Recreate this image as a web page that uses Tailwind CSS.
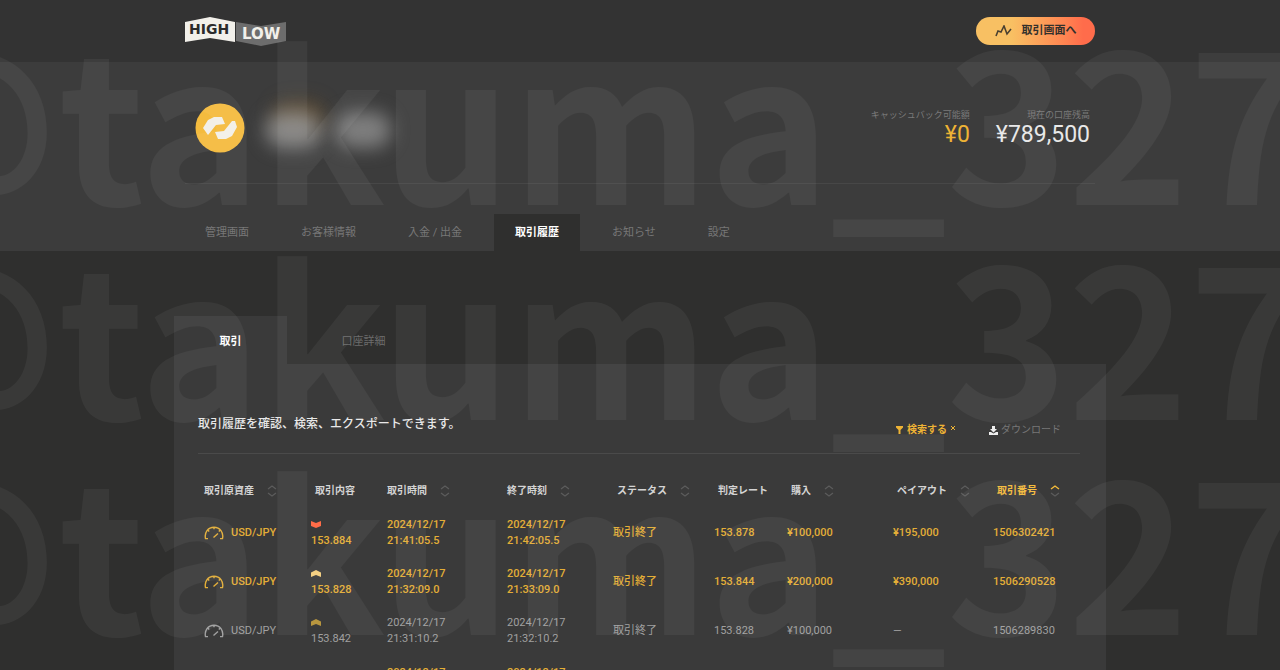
<!DOCTYPE html>
<html lang="ja">
<head>
    <meta charset="UTF-8">
    <meta name="viewport" content="width=device-width, initial-scale=1.0">
    <title>取引履歴 | HighLow</title>
    <script src="https://cdn.jsdelivr.net/npm/@tailwindcss/browser@4"></script>
</head>
<body class="bg-[#2f2f2e] font-['Roboto','Noto_Sans_CJK_JP',sans-serif] text-[11px] text-[#e8e8e8]">
<div class="relative min-h-screen overflow-hidden">

    <svg class="hidden">
        <symbol id="sort" viewBox="0 0 10 12">
            <path d="M1 4 5 1l4 3M1 8l4 3 4-3" fill="none" stroke="#5c5c5c" stroke-width="1.2"/>
        </symbol>
        <symbol id="sort-up" viewBox="0 0 10 12">
            <path d="M1 8l4 3 4-3" fill="none" stroke="#5c5c5c" stroke-width="1.2"/>
            <path d="M1 4 5 1l4 3" fill="none" stroke="#f4bb3a" stroke-width="1.4"/>
        </symbol>
        <symbol id="gauge" viewBox="0 0 20 14">
            <path d="M4 12.600H1.500C.2 6.500 4 1.200 10 1.200s9.800 5.300 8.500 11.400H16M10 1.200v2M4 4.200l1.200 1.200M16 4.200l-1.200 1.200M9.500 11.500l4.500-4" fill="none" stroke="currentColor" stroke-width="1.400"/>
        </symbol>
        <symbol id="low" viewBox="0 0 10 7">
            <path d="M0 0l5 2 5-2v5L5 7 0 5z" fill="#ff6c48"/>
        </symbol>
        <symbol id="high" viewBox="0 0 10 7">
            <path d="M0 2.500 5 0l5 2.500V7L5 5 0 7z" fill="currentColor"/>
        </symbol>
    </svg>

    <!-- header -->
    <header class="bg-[#333]">
        <div class="mx-auto flex h-[62px] max-w-[910px] items-center justify-between">
            <a href="#" aria-label="HighLow" class="pt-0.5">
                <svg class="h-[30px] w-[101px]" viewBox="0 0 101 30">
                    <path d="M0 5 25 0l25 5v20l-25-4-25 4z" fill="#f2f0ea"/>
                    <path d="M51 5l25 4 25-4v19l-25 5-25-5z" fill="#6d6d6d"/>
                    <text x="4" y="17" class="font-['DejaVu_Sans'] text-[14px] font-bold" fill="#2b2b2b">HIGH</text>
                    <text x="57" y="22" class="font-['DejaVu_Sans'] text-[15px] font-bold" fill="#f2f0ea">LOW</text>
                </svg>
            </a>
            <button class="flex h-7 w-[119px] items-center justify-center gap-2.5 rounded-full bg-linear-to-r from-[#f8c063] from-30% to-[#ff6c4b] to-90% font-bold text-[#33302c]">
                <svg class="h-3 w-[17px]" viewBox="0 0 17 12"><path d="M1 11 3 6l3 1 3-6 3 8 4-5" fill="none" stroke="#4a4030" stroke-width="1.6"/></svg>
                取引画面へ
            </button>
        </div>
    </header>

    <!-- account -->
    <section class="bg-[#3c3c3c]">
        <div class="mx-auto max-w-[910px]">
            <div class="flex h-[122px] items-center justify-between border-b border-[#474747] pr-[5px] pl-2.5">
                <div class="flex items-center gap-5 pt-2.5">
                    <svg class="size-[50px]" viewBox="0 0 50 50">
                        <circle cx="25" cy="25" r="24.500" fill="#f4bb3e"/>
                        <path d="M8 25l5-8 6-3h8l3 7-9 1-8 10z" fill="#f2efe8"/>
                        <path d="M42 24l-5 9-6 3h-8l-3-7 9-1 8-10h3z" fill="#f2efe8"/>
                    </svg>
                    <div class="relative h-14 w-[130px]">
                        <div class="absolute top-0 left-2 h-8 w-[52px] rounded-full bg-[#7a5620]/40 blur-[9px]"></div>
                        <div class="absolute top-3 left-0 h-9 w-[56px] rounded-full bg-[#9a9a9a]/75 blur-[9px]"></div>
                        <div class="absolute top-3 left-[70px] h-9 w-[56px] rounded-full bg-[#9a9a9a]/70 blur-[9px]"></div>
                    </div>
                </div>
                <dl class="flex gap-[26px] pt-2.5 text-right">
                    <div>
                        <dt class="text-[9px] leading-[14px] text-[#7a7a7a]">キャッシュバック可能額</dt>
                        <dd class="text-[23px] leading-[26px] text-[#eeb335]">¥0</dd>
                    </div>
                    <div>
                        <dt class="text-[9px] leading-[14px] text-[#7a7a7a]">現在の口座残高</dt>
                        <dd class="text-[23px] leading-[26px]">¥789,500</dd>
                    </div>
                </dl>
            </div>
            <nav class="flex gap-3 pt-[30px] leading-[37px] text-[#777]">
                <a href="#" class="px-5">管理画面</a>
                <a href="#" class="px-5">お客様情報</a>
                <a href="#" class="px-5">入金 / 出金</a>
                <a href="#" class="bg-[#2f2f2e] px-[21px] font-bold text-white">取引履歴</a>
                <a href="#" class="px-5">お知らせ</a>
                <a href="#" class="px-5">設定</a>
            </nav>
        </div>
    </section>

    <!-- history -->
    <main class="mx-auto max-w-[932px] pt-[65px]">
        <div class="flex leading-[44px]">
            <a href="#" class="w-[113px] bg-[#3a3a3a] pt-1 text-center font-bold text-white">取引</a>
            <a href="#" class="w-[153px] pt-1 text-center text-[#6c6c6c]">口座詳細</a>
        </div>
        <div class="bg-[#3a3a3a] pt-[46px] pr-[26px] pb-10 pl-6">
            <div class="flex h-[44px] items-start justify-between border-b border-[#4a4a4a]">
                <h1 class="text-[12px] leading-[28px] font-medium">取引履歴を確認、検索、エクスポートできます。</h1>
                <div class="flex gap-[34px] pt-2.5 pr-[19px] text-[10px] leading-[20px]">
                    <button class="flex items-center gap-1 font-bold text-[#eeb335]">
                        <svg class="h-2 w-[7px]" viewBox="0 0 7 8"><path d="M0 0h7v1.500L4.500 4v4h-2V4L0 1.500z" fill="currentColor"/></svg>
                        検索する
                        <svg class="mb-1 size-1" viewBox="0 0 4 4"><path d="M0 0l4 4M4 0 0 4" stroke="currentColor"/></svg>
                    </button>
                    <button class="flex items-center gap-[3px] text-[#777]">
                        <svg class="size-[9px]" viewBox="0 0 9 9"><path d="M3 0h3v3h2L4.500 6.500 1 3h2zM0 6h2l2.500 1.500L7 6h2v3H0z" fill="#eee"/></svg>
                        ダウンロード
                    </button>
                </div>
            </div>

            <table class="mt-[19px] w-full table-fixed text-left font-medium text-[#e3ae37]">
                <colgroup>
                    <col class="w-[113px]"><col class="w-[76px]"><col class="w-[120px]">
                    <col class="w-[106px]"><col class="w-[101px]"><col class="w-[73px]">
                    <col class="w-[106px]"><col class="w-[100px]"><col class="w-[87px]">
                </colgroup>
                <thead class="text-[10px] text-[#d4d4d4]">
                    <tr class="h-[35px]">
                        <th class="pl-1.5"><button class="flex items-center gap-[13px]">取引原資産<svg class="h-3 w-2.5"><use href="#sort"/></svg></button></th>
                        <th class="pl-1">取引内容</th>
                        <th><button class="flex items-center gap-[13px]">取引時間<svg class="h-3 w-2.5"><use href="#sort"/></svg></button></th>
                        <th><button class="flex items-center gap-[13px]">終了時刻<svg class="h-3 w-2.5"><use href="#sort"/></svg></button></th>
                        <th class="pl-1"><button class="flex items-center gap-[13px]">ステータス<svg class="h-3 w-2.5"><use href="#sort"/></svg></button></th>
                        <th class="pl-1">判定レート</th>
                        <th class="pl-1"><button class="flex items-center gap-[13px]">購入<svg class="h-3 w-2.5"><use href="#sort"/></svg></button></th>
                        <th class="pl-1"><button class="flex items-center gap-[13px]">ペイアウト<svg class="h-3 w-2.5"><use href="#sort"/></svg></button></th>
                        <th class="pl-1"><button class="flex items-center gap-[13px] text-[#f4bb3a]">取引番号<svg class="h-3 w-2.5"><use href="#sort-up"/></svg></button></th>
                    </tr>
                </thead>
                <tbody class="leading-[16px]">
                    <tr class="h-[49px]">
                        <td class="pl-1.5"><div class="flex items-center gap-[7px]"><svg class="h-3.5 w-5"><use href="#gauge"/></svg>USD/JPY</div></td>
                        <td><svg class="mt-1 mb-[5px] h-[7px] w-2.5"><use href="#low"/></svg>153.884</td>
                        <td>2024/12/17<br>21:41:05.5</td>
                        <td>2024/12/17<br>21:42:05.5</td>
                        <td>取引終了</td>
                        <td>153.878</td>
                        <td>¥100,000</td>
                        <td>¥195,000</td>
                        <td>1506302421</td>
                    </tr>
                    <tr class="h-[49px]">
                        <td class="pl-1.5"><div class="flex items-center gap-[7px]"><svg class="h-3.5 w-5"><use href="#gauge"/></svg>USD/JPY</div></td>
                        <td><svg class="mt-1 mb-[5px] h-[7px] w-2.5 text-[#f3cd7c]"><use href="#high"/></svg>153.828</td>
                        <td>2024/12/17<br>21:32:09.0</td>
                        <td>2024/12/17<br>21:33:09.0</td>
                        <td>取引終了</td>
                        <td>153.844</td>
                        <td>¥200,000</td>
                        <td>¥390,000</td>
                        <td>1506290528</td>
                    </tr>
                    <tr class="h-[49px] font-normal text-[#a0a0a0]">
                        <td class="pl-1.5"><div class="flex items-center gap-[7px]"><svg class="h-3.5 w-5"><use href="#gauge"/></svg>USD/JPY</div></td>
                        <td><svg class="mt-1 mb-[5px] h-[7px] w-2.5 text-[#b8963f]"><use href="#high"/></svg>153.842</td>
                        <td>2024/12/17<br>21:31:10.2</td>
                        <td>2024/12/17<br>21:32:10.2</td>
                        <td>取引終了</td>
                        <td>153.828</td>
                        <td>¥100,000</td>
                        <td>—</td>
                        <td>1506289830</td>
                    </tr>
                    <tr class="h-[49px] align-top">
                        <td></td>
                        <td></td>
                        <td class="pt-2.5">2024/12/17</td>
                        <td class="pt-2.5">2024/12/17</td>
                        <td colspan="5"></td>
                    </tr>
                </tbody>
            </table>
        </div>
    </main>

    <!-- account watermark -->
    <div class="pointer-events-none absolute top-2 left-[-148px] font-['Noto_Sans_CJK_JP',sans-serif] text-[205px] leading-[215px] font-bold whitespace-nowrap text-white/5" aria-hidden="true">
        <p>@takuma_327</p>
        <p>@takuma_327</p>
        <p>@takuma_327</p>
        <p>@takuma_327</p>
    </div>
</div>
</body>
</html>
